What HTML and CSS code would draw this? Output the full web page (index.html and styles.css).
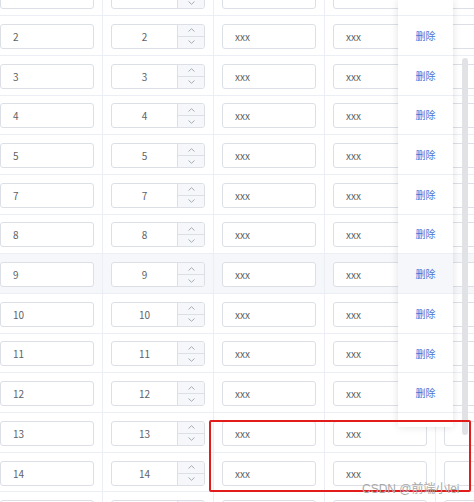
FILE: index.html
```html
<!DOCTYPE html>
<html>
<head>
<meta charset="utf-8">
<link rel="stylesheet" href="styles.css">
</head>
<body>
<div class="viewport">
  <div class="table">
    <div class="row"><div class="cell"><div class="input"></div></div><div class="cell"><div class="num"><span class="num-val"></span><span class="ctrl"><span class="up"><svg width="7" height="4" viewBox="0 0 7 4"><path d="M0.5 3.5 L3.5 0.7 L6.5 3.5" /></svg></span><span class="down"><svg width="7" height="4" viewBox="0 0 7 4"><path d="M0.5 0.5 L3.5 3.3 L6.5 0.5" /></svg></span></span></div></div><div class="cell"><div class="input"></div></div><div class="cell"><div class="input"></div></div><div class="cell"><div class="input"></div></div></div>
    <div class="row"><div class="cell"><div class="input">2</div></div><div class="cell"><div class="num"><span class="num-val">2</span><span class="ctrl"><span class="up"><svg width="7" height="4" viewBox="0 0 7 4"><path d="M0.5 3.5 L3.5 0.7 L6.5 3.5" /></svg></span><span class="down"><svg width="7" height="4" viewBox="0 0 7 4"><path d="M0.5 0.5 L3.5 3.3 L6.5 0.5" /></svg></span></span></div></div><div class="cell"><div class="input">xxx</div></div><div class="cell"><div class="input">xxx</div></div><div class="cell"><div class="input"></div></div></div>
    <div class="row"><div class="cell"><div class="input">3</div></div><div class="cell"><div class="num"><span class="num-val">3</span><span class="ctrl"><span class="up"><svg width="7" height="4" viewBox="0 0 7 4"><path d="M0.5 3.5 L3.5 0.7 L6.5 3.5" /></svg></span><span class="down"><svg width="7" height="4" viewBox="0 0 7 4"><path d="M0.5 0.5 L3.5 3.3 L6.5 0.5" /></svg></span></span></div></div><div class="cell"><div class="input">xxx</div></div><div class="cell"><div class="input">xxx</div></div><div class="cell"><div class="input"></div></div></div>
    <div class="row"><div class="cell"><div class="input">4</div></div><div class="cell"><div class="num"><span class="num-val">4</span><span class="ctrl"><span class="up"><svg width="7" height="4" viewBox="0 0 7 4"><path d="M0.5 3.5 L3.5 0.7 L6.5 3.5" /></svg></span><span class="down"><svg width="7" height="4" viewBox="0 0 7 4"><path d="M0.5 0.5 L3.5 3.3 L6.5 0.5" /></svg></span></span></div></div><div class="cell"><div class="input">xxx</div></div><div class="cell"><div class="input">xxx</div></div><div class="cell"><div class="input"></div></div></div>
    <div class="row"><div class="cell"><div class="input">5</div></div><div class="cell"><div class="num"><span class="num-val">5</span><span class="ctrl"><span class="up"><svg width="7" height="4" viewBox="0 0 7 4"><path d="M0.5 3.5 L3.5 0.7 L6.5 3.5" /></svg></span><span class="down"><svg width="7" height="4" viewBox="0 0 7 4"><path d="M0.5 0.5 L3.5 3.3 L6.5 0.5" /></svg></span></span></div></div><div class="cell"><div class="input">xxx</div></div><div class="cell"><div class="input">xxx</div></div><div class="cell"><div class="input"></div></div></div>
    <div class="row"><div class="cell"><div class="input">7</div></div><div class="cell"><div class="num"><span class="num-val">7</span><span class="ctrl"><span class="up"><svg width="7" height="4" viewBox="0 0 7 4"><path d="M0.5 3.5 L3.5 0.7 L6.5 3.5" /></svg></span><span class="down"><svg width="7" height="4" viewBox="0 0 7 4"><path d="M0.5 0.5 L3.5 3.3 L6.5 0.5" /></svg></span></span></div></div><div class="cell"><div class="input">xxx</div></div><div class="cell"><div class="input">xxx</div></div><div class="cell"><div class="input"></div></div></div>
    <div class="row"><div class="cell"><div class="input">8</div></div><div class="cell"><div class="num"><span class="num-val">8</span><span class="ctrl"><span class="up"><svg width="7" height="4" viewBox="0 0 7 4"><path d="M0.5 3.5 L3.5 0.7 L6.5 3.5" /></svg></span><span class="down"><svg width="7" height="4" viewBox="0 0 7 4"><path d="M0.5 0.5 L3.5 3.3 L6.5 0.5" /></svg></span></span></div></div><div class="cell"><div class="input">xxx</div></div><div class="cell"><div class="input">xxx</div></div><div class="cell"><div class="input"></div></div></div>
    <div class="row hover"><div class="cell"><div class="input">9</div></div><div class="cell"><div class="num"><span class="num-val">9</span><span class="ctrl"><span class="up"><svg width="7" height="4" viewBox="0 0 7 4"><path d="M0.5 3.5 L3.5 0.7 L6.5 3.5" /></svg></span><span class="down"><svg width="7" height="4" viewBox="0 0 7 4"><path d="M0.5 0.5 L3.5 3.3 L6.5 0.5" /></svg></span></span></div></div><div class="cell"><div class="input">xxx</div></div><div class="cell"><div class="input">xxx</div></div><div class="cell"><div class="input"></div></div></div>
    <div class="row"><div class="cell"><div class="input">10</div></div><div class="cell"><div class="num"><span class="num-val">10</span><span class="ctrl"><span class="up"><svg width="7" height="4" viewBox="0 0 7 4"><path d="M0.5 3.5 L3.5 0.7 L6.5 3.5" /></svg></span><span class="down"><svg width="7" height="4" viewBox="0 0 7 4"><path d="M0.5 0.5 L3.5 3.3 L6.5 0.5" /></svg></span></span></div></div><div class="cell"><div class="input">xxx</div></div><div class="cell"><div class="input">xxx</div></div><div class="cell"><div class="input"></div></div></div>
    <div class="row"><div class="cell"><div class="input">11</div></div><div class="cell"><div class="num"><span class="num-val">11</span><span class="ctrl"><span class="up"><svg width="7" height="4" viewBox="0 0 7 4"><path d="M0.5 3.5 L3.5 0.7 L6.5 3.5" /></svg></span><span class="down"><svg width="7" height="4" viewBox="0 0 7 4"><path d="M0.5 0.5 L3.5 3.3 L6.5 0.5" /></svg></span></span></div></div><div class="cell"><div class="input">xxx</div></div><div class="cell"><div class="input">xxx</div></div><div class="cell"><div class="input"></div></div></div>
    <div class="row"><div class="cell"><div class="input">12</div></div><div class="cell"><div class="num"><span class="num-val">12</span><span class="ctrl"><span class="up"><svg width="7" height="4" viewBox="0 0 7 4"><path d="M0.5 3.5 L3.5 0.7 L6.5 3.5" /></svg></span><span class="down"><svg width="7" height="4" viewBox="0 0 7 4"><path d="M0.5 0.5 L3.5 3.3 L6.5 0.5" /></svg></span></span></div></div><div class="cell"><div class="input">xxx</div></div><div class="cell"><div class="input">xxx</div></div><div class="cell"><div class="input"></div></div></div>
    <div class="row"><div class="cell"><div class="input">13</div></div><div class="cell"><div class="num"><span class="num-val">13</span><span class="ctrl"><span class="up"><svg width="7" height="4" viewBox="0 0 7 4"><path d="M0.5 3.5 L3.5 0.7 L6.5 3.5" /></svg></span><span class="down"><svg width="7" height="4" viewBox="0 0 7 4"><path d="M0.5 0.5 L3.5 3.3 L6.5 0.5" /></svg></span></span></div></div><div class="cell"><div class="input">xxx</div></div><div class="cell"><div class="input">xxx</div></div><div class="cell"><div class="input"></div></div></div>
    <div class="row"><div class="cell"><div class="input">14</div></div><div class="cell"><div class="num"><span class="num-val">14</span><span class="ctrl"><span class="up"><svg width="7" height="4" viewBox="0 0 7 4"><path d="M0.5 3.5 L3.5 0.7 L6.5 3.5" /></svg></span><span class="down"><svg width="7" height="4" viewBox="0 0 7 4"><path d="M0.5 0.5 L3.5 3.3 L6.5 0.5" /></svg></span></span></div></div><div class="cell"><div class="input">xxx</div></div><div class="cell"><div class="input">xxx</div></div><div class="cell"><div class="input"></div></div></div>
    <div class="row"><div class="cell"><div class="input"></div></div><div class="cell"><div class="num"><span class="num-val"></span><span class="ctrl"><span class="up"></span><span class="down"></span></span></div></div><div class="cell"><div class="input"></div></div><div class="cell"><div class="input"></div></div><div class="cell"><div class="input"></div></div></div>
  </div>

  <div class="fixed-right">
    <div class="fixed-inner">
      <div class="frow"></div>
      <div class="frow"><span class="link">删除</span></div>
      <div class="frow"><span class="link">删除</span></div>
      <div class="frow"><span class="link">删除</span></div>
      <div class="frow"><span class="link">删除</span></div>
      <div class="frow"><span class="link">删除</span></div>
      <div class="frow"><span class="link">删除</span></div>
      <div class="frow hover"><span class="link">删除</span></div>
      <div class="frow"><span class="link">删除</span></div>
      <div class="frow"><span class="link">删除</span></div>
      <div class="frow"><span class="link">删除</span></div>
      <div class="frow"></div>
    </div>
  </div>

  <div class="scroll-thumb"></div>
  <div class="annotation"></div>
  <div class="watermark">CSDN @前端小lei</div>
</div>
</body>
</html>
```

FILE: styles.css
```css
html, body {
  margin: 0;
  padding: 0;
  background: #ffffff;
}

body {
  font-family: "Noto Sans CJK SC", "Liberation Sans", sans-serif;
  font-size: 10px;
  color: #606266;
}

.viewport {
  position: relative;
  width: 474px;
  height: 502px;
  overflow: hidden;
  background: #ffffff;
}

.table {
  margin-top: -23.5px;
  margin-left: -8px;
  width: max-content;
}

.row {
  display: flex;
  height: 39.7px;
  box-sizing: border-box;
  border-bottom: 1px solid #ebeef5;
}

.row.hover {
  background: #f5f7fa;
}

.cell {
  width: 111px;
  box-sizing: border-box;
  padding: 7.8px 8px 0 8px;
  border-right: 1px solid #ebeef5;
}

.input {
  width: 94px;
  height: 25px;
  box-sizing: border-box;
  border: 1px solid #dcdfe6;
  border-radius: 3px;
  background: #ffffff;
  padding-left: 12px;
  line-height: 23px;
  font-size: 10px;
  color: #606266;
}

.num {
  width: 94px;
  height: 25px;
  box-sizing: border-box;
  border: 1px solid #dcdfe6;
  border-radius: 3px;
  background: #ffffff;
  display: flex;
  overflow: hidden;
}

.num-val {
  flex: 1;
  text-align: center;
  line-height: 23px;
  font-size: 10px;
  color: #606266;
}

.ctrl {
  width: 26px;
  display: flex;
  flex-direction: column;
  border-left: 1px solid #dcdfe6;
  background: #f5f7fa;
}

.ctrl .up,
.ctrl .down {
  flex: 1;
  display: flex;
  align-items: center;
  justify-content: center;
}

.ctrl .up {
  border-bottom: 1px solid #dcdfe6;
}

.ctrl svg path {
  fill: none;
  stroke: #a8abb2;
  stroke-width: 1;
}

.fixed-right {
  position: absolute;
  left: 398px;
  top: 0;
  width: 55px;
  height: 427px;
  overflow: hidden;
  background: #ffffff;
  box-shadow: 0 0 8px rgba(0, 0, 0, 0.12);
}

.fixed-inner {
  margin-top: -23.5px;
}

.frow {
  height: 39.7px;
  box-sizing: border-box;
  border-bottom: 1px solid #ebeef5;
  display: flex;
  align-items: center;
  justify-content: center;
}

.frow.hover {
  background: #f5f7fa;
}

.link {
  font-size: 10px;
  color: #4a72d4;
}

.scroll-thumb {
  position: absolute;
  left: 462px;
  top: 58px;
  width: 6px;
  height: 377px;
  border-radius: 3px;
  background: #e1e2e5;
}

.annotation {
  position: absolute;
  left: 209px;
  top: 420px;
  width: 262px;
  height: 72px;
  box-sizing: border-box;
  border: 2px solid #e21b1b;
  border-radius: 2px;
}

.watermark {
  position: absolute;
  left: 362px;
  top: 479px;
  font-family: "Liberation Sans", "Noto Sans CJK SC", sans-serif;
  font-size: 12px;
  color: #a9a9a9;
  white-space: nowrap;
}
```
